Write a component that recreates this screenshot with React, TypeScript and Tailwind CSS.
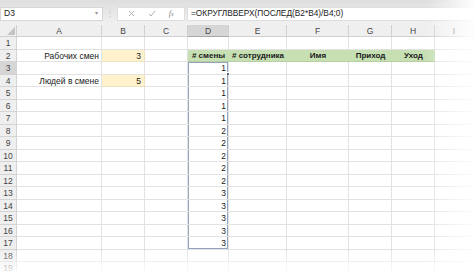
import React from "react";

const colLetters = ["A", "B", "C", "D", "E", "F", "G", "H", "I"];
const dVals: Record<number, string> = {
  3: "1", 4: "1", 5: "1", 6: "1", 7: "1",
  8: "2", 9: "2", 10: "2", 11: "2", 12: "2",
  13: "3", 14: "3", 15: "3", 16: "3", 17: "3",
};
const greenHead: Record<number, string> = { 3: "# смены", 4: "# сотрудника", 5: "Имя", 6: "Приход", 7: "Уход" };

function Cell({ r, c }: { r: number; c: number }) {
  const base = "h-[12.5px] border-r border-b border-[#e2e2e2] leading-[12px] text-[8.5px] text-[#1a1a1a] overflow-visible whitespace-nowrap relative";
  if (r === 2 && greenHead[c]) {
    return (
      <div className="h-[12.5px] bg-[#c6e0b4] border-b border-[#b5cfa3] leading-[12px] text-[8px] font-bold text-[#1a1a1a] text-center whitespace-nowrap overflow-hidden">
        {greenHead[c]}
      </div>
    );
  }
  if (c === 0 && r === 2) return <div className={`${base} text-right pr-[2px]`}>Рабочих смен</div>;
  if (c === 0 && r === 4) return <div className={`${base} text-right pr-[2px]`}>Людей в смене</div>;
  if (c === 1 && (r === 2 || r === 4))
    return (
      <div className="h-[12.5px] bg-[#fff2cc] border-r border-b border-[#ece2c0] leading-[12px] text-[8.5px] text-[#1a1a1a] text-right pr-[3px]">
        {r === 2 ? "3" : "5"}
      </div>
    );
  if (c === 3 && dVals[r]) {
    const sh =
      r === 3
        ? "shadow-[inset_1px_0_0_#93a3bb,inset_-1px_0_0_#93a3bb,inset_0_1px_0_#93a3bb]"
        : r === 17
        ? "shadow-[inset_1px_0_0_#93a3bb,inset_-1px_0_0_#93a3bb,inset_0_-1px_0_#93a3bb]"
        : "shadow-[inset_1px_0_0_#93a3bb,inset_-1px_0_0_#93a3bb]";
    return (
      <div className={`${base} ${sh} text-right pr-[2px]`}>
        {dVals[r]}
        {r === 3 && <span className="absolute right-[-2px] bottom-[-2px] w-[4px] h-[4px] bg-[#5b6b80] border border-white" />}
      </div>
    );
  }
  return <div className={base} />;
}

export default function App() {
  const rows = Array.from({ length: 19 }, (_, i) => i + 1);
  return (
    <div className="relative w-[474px] h-[272px] overflow-hidden bg-white font-['Liberation_Sans',sans-serif]">
      {/* formula bar */}
      <div className="h-[25px] bg-gradient-to-b from-[#dedede] to-[#f1f1f1] flex items-center pt-[2px]">
        <div className="w-[103px] h-[14px] bg-white border border-[#d6d6d6] flex items-center justify-between pl-[3px] pr-[4px] text-[8.5px] text-[#222]">
          <span>D3</span>
          <span className="text-[6px] text-[#999]">▾</span>
        </div>
        <div className="w-[14px] flex justify-center text-[8px] text-[#bbb] leading-none">⋮</div>
        <div className="w-[68px] h-[14px] bg-white border border-[#dedede] flex items-center justify-around px-[4px] text-[#b5b5b5]">
          <svg width="7" height="7" viewBox="0 0 7 7"><path d="M1 1L6 6M6 1L1 6" stroke="#b0b0b0" strokeWidth="1" /></svg>
          <svg width="8" height="7" viewBox="0 0 8 7"><path d="M1 4L3 6L7 1" stroke="#b0b0b0" strokeWidth="1" fill="none" /></svg>
          <span className="italic text-[8px] font-['Liberation_Serif',serif] text-[#888]">f<span className="text-[6px]">x</span></span>
        </div>
        <div className="flex-1 ml-[2px] h-[14px] bg-white border border-[#dedede] flex items-center pl-[3px] text-[8.3px] text-[#222] whitespace-nowrap">
          =ОКРУГЛВВЕРХ(ПОСЛЕД(B2*B4)/B4;0)
        </div>
      </div>

      {/* sheet grid */}
      <div className="grid grid-cols-[17px_85px_43px_43px_41px_58px_62px_43px_43px_1fr]">
        <div className="h-[12px] bg-[#efefef] border-r border-b border-[#d0d0d0] relative">
          <svg className="absolute right-[1px] bottom-[1px]" width="8" height="8" viewBox="0 0 8 8"><path d="M8 0L8 8L0 8Z" fill="#c4c4c4" /></svg>
        </div>
        {colLetters.map((l) => (
          <div
            key={l}
            className={`h-[12px] border-r border-b border-[#d0d0d0] text-center text-[8.5px] leading-[12px] text-[#444] ${l === "D" ? "bg-[#d6d6d6] border-b-[#a8a8a8]" : "bg-[#efefef]"}`}
          >
            {l}
          </div>
        ))}
        {rows.map((r) => (
          <React.Fragment key={r}>
            <div
              className={`h-[12.5px] border-r border-b border-[#d4d4d4] text-center text-[8.5px] leading-[12px] text-[#444] ${r === 3 ? "bg-[#d6d6d6]" : "bg-[#efefef]"}`}
            >
              {r}
            </div>
            {colLetters.map((_, c) => (
              <Cell key={c} r={r} c={c} />
            ))}
          </React.Fragment>
        ))}
      </div>

      {/* photo vignette */}
      <div className="pointer-events-none absolute inset-0 bg-[linear-gradient(to_right,transparent_90%,rgba(255,255,255,0.95))]" />
      <div className="pointer-events-none absolute inset-0 bg-[linear-gradient(to_bottom,transparent_92%,rgba(255,255,255,0.9))]" />
    </div>
  );
}
